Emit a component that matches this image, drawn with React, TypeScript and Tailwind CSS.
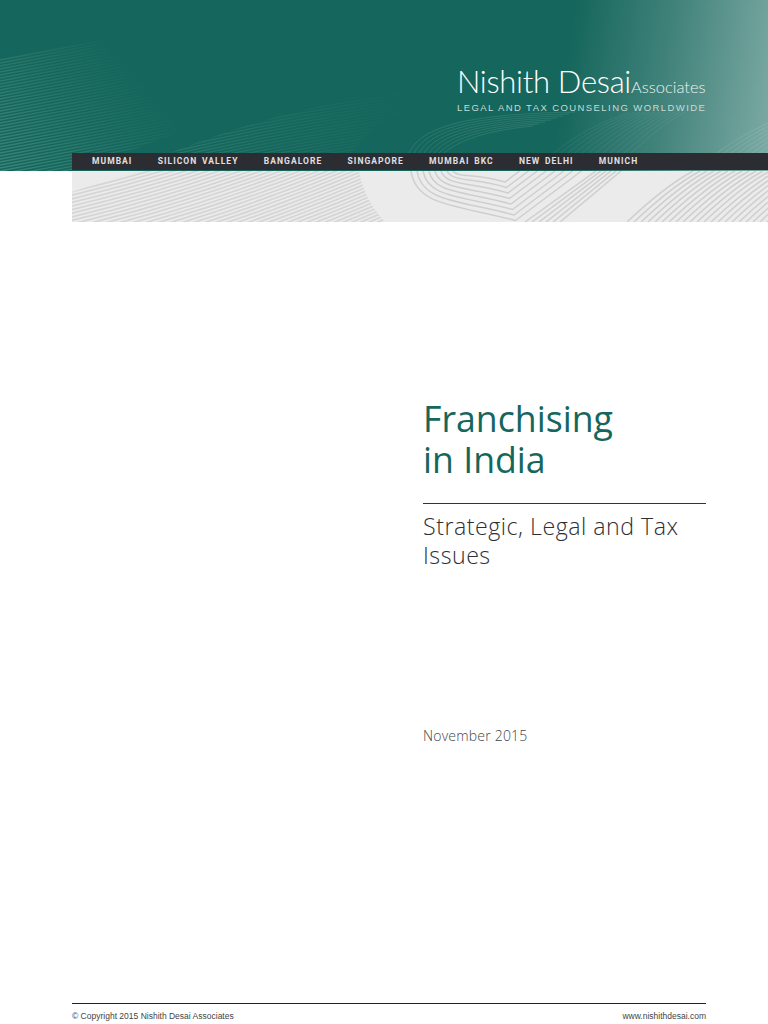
const offices = ["MUMBAI", "SILICON VALLEY", "BANGALORE", "SINGAPORE", "MUMBAI BKC", "NEW DELHI", "MUNICH"];

const range = (n: number) => Array.from({ length: n }, (_, i) => i);

function TealArt() {
  return (
    <svg className="absolute inset-0 h-full w-full" viewBox="0 0 768 171" preserveAspectRatio="none" fill="none">
      <defs>
        <linearGradient id="fade" gradientUnits="userSpaceOnUse" x1="575" y1="0" x2="785" y2="30">
          <stop offset="0" stopColor="#fff" stopOpacity="0" />
          <stop offset="0.5" stopColor="#fff" stopOpacity="0.2" />
          <stop offset="1" stopColor="#fff" stopOpacity="0.44" />
        </linearGradient>
        <linearGradient id="strong" gradientUnits="userSpaceOnUse" x1="0" y1="171" x2="130" y2="60">
          <stop offset="0" stopColor="#6fb0a2" stopOpacity="0.42" />
          <stop offset="1" stopColor="#6fb0a2" stopOpacity="0" />
        </linearGradient>
        <linearGradient id="faint" gradientUnits="userSpaceOnUse" x1="170" y1="153" x2="384" y2="90">
          <stop offset="0" stopColor="#6fb0a2" stopOpacity="0.25" />
          <stop offset="1" stopColor="#6fb0a2" stopOpacity="0.02" />
        </linearGradient>
        <clipPath id="upper">
          <path d="M0 0 H520 V55 C 400 68, 310 80, 240 107 C 180 130, 130 155, 67 171 H0 Z" />
        </clipPath>
        <clipPath id="lower">
          <path d="M170 153 C 230 130, 300 105, 400 93 L 400 115 C 375 125, 360 140, 352 153 Z" />
        </clipPath>
      </defs>
      <g clipPath="url(#upper)" stroke="url(#strong)" strokeWidth="1.3">
        {range(70).map((i) => (
          <path key={i} d={`M0 ${60 + i * 3} Q 200 ${22 + i * 3} 420 ${-20 + i * 3}`} />
        ))}
      </g>
      <g clipPath="url(#lower)" stroke="url(#faint)" strokeWidth="1.2">
        {range(50).map((i) => (
          <path key={i} d={`M150 ${100 + i * 3} Q 280 ${68 + i * 3} 420 ${50 + i * 3}`} />
        ))}
      </g>
      <g stroke="#5e9f92" strokeOpacity="0.36" strokeWidth="0.9">
        {range(8).map((i) => (
          <path key={i} d={`M${409 + i * 5} 153 C ${420 + i * 5} ${130 + i * 2}, ${455 + i * 3} ${114 + i * 2.5}, ${575 - i * 6} ${112 + i * 2}`} />
        ))}
        {range(12).map((i) => (
          <path key={i} d={`M${554 + i * 7} 153 C ${572 + i * 7} 137, ${600 + i * 6} 122, ${630 + i * 5} 112`} strokeOpacity="0.22" />
        ))}
        {range(10).map((i) => (
          <path key={i} d={`M${717 + i * 7} 153 C ${735 + i * 7} 140, ${752 + i * 7} 130, ${775 + i * 7} 120`} />
        ))}
      </g>
      <rect width="768" height="171" fill="url(#fade)" />
    </svg>
  );
}

function GreyArt() {
  return (
    <svg className="absolute inset-0 h-full w-full" viewBox="72 171 696 51" preserveAspectRatio="none" fill="none">
      <defs>
        <clipPath id="sweep">
          <path d="M72 192 C 95 184, 118 177, 140 171 H359 C 362 190, 372 208, 385 222 H72 Z" />
        </clipPath>
      </defs>
      <g clipPath="url(#sweep)" stroke="#d5d5d5" strokeWidth="1.7">
        {range(46).map((i) => (
          <path key={i} d={`M72 ${170 + i * 3.6} Q 230 ${132 + i * 3.6} 390 ${62 + i * 3.6}`} />
        ))}
      </g>
      <g stroke="#cfcfcf" strokeWidth="1.5">
        {range(8).map((i) => {
          const ax = 505 + i * 1.5;
          const ay = 182 + i * 5.5;
          return (
            <path
              key={i}
              d={`M${453 - i * 6} 171 C ${458 - i * 6} ${178 + i * 4}, ${476 - i * 3} ${ay - 9 - i}, ${ax} ${ay} L ${ax + (ay - 171) / 0.75} 171`}
            />
          );
        })}
        {range(6).map((i) => (
          <path key={i} d={`M${525 + i * 7} 222 L ${596 + i * 5} 171`} />
        ))}
        {range(24).map((i) => (
          <path key={i} d={`M${627 + i * 7} 222 C ${645 + i * 7} 205, ${667 + i * 7} 185, ${693 + i * 7} 171`} />
        ))}
      </g>
    </svg>
  );
}

export default function App() {
  return (
    <div className="flex min-h-[1024px] flex-col bg-white font-['Liberation_Sans',sans-serif]">
      <header className="relative flex h-[171px] flex-col justify-end bg-[#15665c]">
        <TealArt />
        <div className="relative mb-[40px] ml-[457px] w-[250px] text-white">
          <div className="flex items-baseline whitespace-nowrap">
            <span className="font-['Lato',sans-serif] text-[31px] font-light leading-[25px] tracking-[-0.3px]">Nishith Desai</span>
            <span className="font-['Lato',sans-serif] text-[16.5px] font-light leading-[25px] opacity-90">Associates</span>
          </div>
          <p className="mt-[2px] whitespace-nowrap text-[9.5px] leading-[11px] tracking-[1.42px] text-[#c5dcd6]">LEGAL AND TAX COUNSELING WORLDWIDE</p>
        </div>
        <nav className="relative mb-px ml-[72px] flex h-[17px] items-center gap-[25.3px] bg-[#2c2c33] pl-[20px] font-['Roboto',sans-serif] text-[8.5px] font-bold tracking-[1.05px] text-[#e0e0e0] [word-spacing:1.5px]">
          {offices.map((o) => (
            <span key={o} className="whitespace-nowrap">{o}</span>
          ))}
        </nav>
      </header>

      <div className="relative ml-[72px] h-[51px] overflow-hidden bg-[#ebebeb]">
        <GreyArt />
      </div>

      <main className="ml-[423px] mr-[62px] flex-1 pt-[176px]">
        <h1 className="font-['Open_Sans',sans-serif] text-[35.7px] leading-[41px] text-[#15665c]">
          Franchising
          <br />
          in India
        </h1>
        <div className="mt-[23px] h-px bg-[#333]" />
        <h2 className="mt-[8px] font-['Open_Sans',sans-serif] text-[23.2px] font-light leading-[29px] tracking-[0.5px] text-[#2f2f35]">Strategic, Legal and Tax Issues</h2>
        <p className="mt-[156px] font-['Open_Sans',sans-serif] text-[14px] font-light leading-[20px] tracking-[0.2px] text-[#444]">November 2015</p>
      </main>

      <footer className="mb-[2px] ml-[72px] mr-[62px] flex justify-between border-t border-[#222] pt-[6px] text-[8.5px] leading-[12px] text-[#444]">
        <span>© Copyright 2015 Nishith Desai Associates</span>
        <span>www.nishithdesai.com</span>
      </footer>
    </div>
  );
}
